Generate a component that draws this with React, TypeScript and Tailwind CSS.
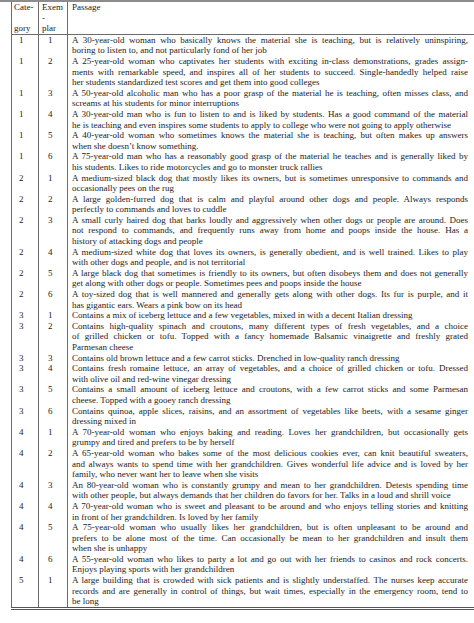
type Row = { cat: string; ex: string; lines: string[] };

const rows: Row[] = [
  {
    cat: "1",
    ex: "1",
    lines: [
      "A 30-year-old woman who basically knows the material she is teaching, but is relatively uninspiring,",
      "boring to listen to, and not particularly fond of her job",
    ],
  },
  {
    cat: "1",
    ex: "2",
    lines: [
      "A 25-year-old woman who captivates her students with exciting in-class demonstrations, grades assign-",
      "ments with remarkable speed, and inspires all of her students to succeed. Single-handedly helped raise",
      "her students standardized test scores and get them into good colleges",
    ],
  },
  {
    cat: "1",
    ex: "3",
    lines: [
      "A 50-year-old alcoholic man who has a poor grasp of the material he is teaching, often misses class, and",
      "screams at his students for minor interruptions",
    ],
  },
  {
    cat: "1",
    ex: "4",
    lines: [
      "A 30-year-old man who is fun to listen to and is liked by students. Has a good command of the material",
      "he is teaching and even inspires some students to apply to college who were not going to apply otherwise",
    ],
  },
  {
    cat: "1",
    ex: "5",
    lines: [
      "A 40-year-old woman who sometimes knows the material she is teaching, but often makes up answers",
      "when she doesn’t know something.",
    ],
  },
  {
    cat: "1",
    ex: "6",
    lines: [
      "A 75-year-old man who has a reasonably good grasp of the material he teaches and is generally liked by",
      "his students. Likes to ride motorcycles and go to monster truck rallies",
    ],
  },
  {
    cat: "2",
    ex: "1",
    lines: [
      "A medium-sized black dog that mostly likes its owners, but is sometimes unresponsive to commands and",
      "occasionally pees on the rug",
    ],
  },
  {
    cat: "2",
    ex: "2",
    lines: [
      "A large golden-furred dog that is calm and playful around other dogs and people. Always responds",
      "perfectly to commands and loves to cuddle",
    ],
  },
  {
    cat: "2",
    ex: "3",
    lines: [
      "A small curly haired dog that barks loudly and aggressively when other dogs or people are around. Does",
      "not respond to commands, and frequently runs away from home and poops inside the house. Has a",
      "history of attacking dogs and people",
    ],
  },
  {
    cat: "2",
    ex: "4",
    lines: [
      "A medium-sized white dog that loves its owners, is generally obedient, and is well trained. Likes to play",
      "with other dogs and people, and is not territorial",
    ],
  },
  {
    cat: "2",
    ex: "5",
    lines: [
      "A large black dog that sometimes is friendly to its owners, but often disobeys them and does not generally",
      "get along with other dogs or people. Sometimes pees and poops inside the house",
    ],
  },
  {
    cat: "2",
    ex: "6",
    lines: [
      "A toy-sized dog that is well mannered and generally gets along with other dogs. Its fur is purple, and it",
      "has gigantic ears. Wears a pink bow on its head",
    ],
  },
  {
    cat: "3",
    ex: "1",
    lines: [
      "Contains a mix of iceberg lettuce and a few vegetables, mixed in with a decent Italian dressing",
    ],
  },
  {
    cat: "3",
    ex: "2",
    lines: [
      "Contains high-quality spinach and croutons, many different types of fresh vegetables, and a choice",
      "of grilled chicken or tofu. Topped with a fancy homemade Balsamic vinaigrette and freshly grated",
      "Parmesan cheese",
    ],
  },
  {
    cat: "3",
    ex: "3",
    lines: [
      "Contains old brown lettuce and a few carrot sticks. Drenched in low-quality ranch dressing",
    ],
  },
  {
    cat: "3",
    ex: "4",
    lines: [
      "Contains fresh romaine lettuce, an array of vegetables, and a choice of grilled chicken or tofu. Dressed",
      "with olive oil and red-wine vinegar dressing",
    ],
  },
  {
    cat: "3",
    ex: "5",
    lines: [
      "Contains a small amount of iceberg lettuce and croutons, with a few carrot sticks and some Parmesan",
      "cheese. Topped with a gooey ranch dressing",
    ],
  },
  {
    cat: "3",
    ex: "6",
    lines: [
      "Contains quinoa, apple slices, raisins, and an assortment of vegetables like beets, with a sesame ginger",
      "dressing mixed in",
    ],
  },
  {
    cat: "4",
    ex: "1",
    lines: [
      "A 70-year-old woman who enjoys baking and reading. Loves her grandchildren, but occasionally gets",
      "grumpy and tired and prefers to be by herself",
    ],
  },
  {
    cat: "4",
    ex: "2",
    lines: [
      "A 65-year-old woman who bakes some of the most delicious cookies ever, can knit beautiful sweaters,",
      "and always wants to spend time with her grandchildren. Gives wonderful life advice and is loved by her",
      "family, who never want her to leave when she visits",
    ],
  },
  {
    cat: "4",
    ex: "3",
    lines: [
      "An 80-year-old woman who is constantly grumpy and mean to her grandchildren. Detests spending time",
      "with other people, but always demands that her children do favors for her. Talks in a loud and shrill voice",
    ],
  },
  {
    cat: "4",
    ex: "4",
    lines: [
      "A 70-year-old woman who is sweet and pleasant to be around and who enjoys telling stories and knitting",
      "in front of her grandchildren. Is loved by her family",
    ],
  },
  {
    cat: "4",
    ex: "5",
    lines: [
      "A 75-year-old woman who usually likes her grandchildren, but is often unpleasant to be around and",
      "prefers to be alone most of the time. Can occasionally be mean to her grandchildren and insult them",
      "when she is unhappy",
    ],
  },
  {
    cat: "4",
    ex: "6",
    lines: [
      "A 55-year-old woman who likes to party a lot and go out with her friends to casinos and rock concerts.",
      "Enjoys playing sports with her grandchildren",
    ],
  },
  {
    cat: "5",
    ex: "1",
    lines: [
      "A large building that is crowded with sick patients and is slightly understaffed. The nurses keep accurate",
      "records and are generally in control of things, but wait times, especially in the emergency room, tend to",
      "be long",
    ],
  },
];

function Passage({ lines }: { lines: string[] }) {
  return (
    <div className="border-l border-[#6b6b6b] pl-[4px] pr-[6px]">
      {lines.map((line, i) =>
        i < lines.length - 1 ? (
          <div
            key={i}
            className="whitespace-nowrap text-justify [text-align-last:justify]"
          >
            {line}
          </div>
        ) : (
          <div key={i} className="whitespace-nowrap">
            {line}
          </div>
        ),
      )}
    </div>
  );
}

export default function App() {
  return (
    <div className="h-[623px] w-[474px] overflow-hidden bg-white font-['Liberation_Serif',_'Times_New_Roman',serif] text-[9px] leading-[10.6px] text-[#1c1c1c]">
      <div className="h-[2px] bg-[#8c8c8c]" />
      <div className="pl-[11px]">
        <div className="grid grid-cols-[27px_29px_1fr] border-b-[3px] border-double border-[#555]">
          {/* header */}
          <div className="border-b border-l border-[#6b6b6b] pl-[2px]">
            <div>Cate-</div>
            <div>&nbsp;</div>
            <div>gory</div>
          </div>
          <div className="border-b border-l border-[#6b6b6b] pl-[3px]">
            <div>Exem</div>
            <div>-</div>
            <div>plar</div>
          </div>
          <div className="border-b border-l border-[#6b6b6b] pl-[4px]">
            Passage
          </div>

          {rows.map((row, i) => (
            <div key={i} className="contents">
              <div className="border-l border-[#6b6b6b] pl-[7px]">{row.cat}</div>
              <div className="border-l border-[#6b6b6b] pl-[9px]">{row.ex}</div>
              <Passage lines={row.lines} />
            </div>
          ))}
        </div>
      </div>
    </div>
  );
}
